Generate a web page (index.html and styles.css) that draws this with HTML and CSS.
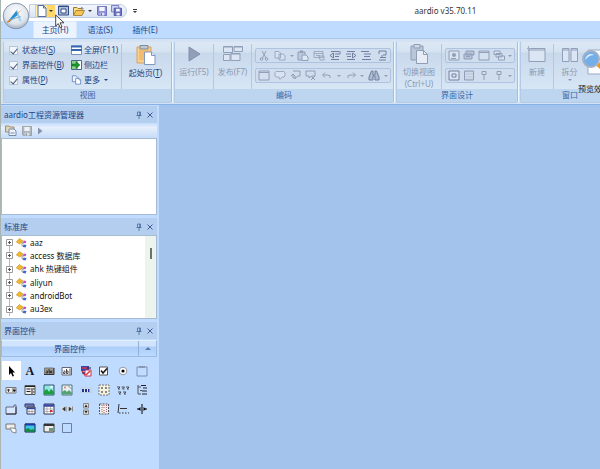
FILE: index.html
```html
<!DOCTYPE html>
<html lang="zh-CN">
<head>
    <meta charset="utf-8">
    <title>aardio v35.70.11</title>
    <link rel="stylesheet" href="styles.css">
</head>
<body>

<!-- Shared icons -->
<svg class="sprite" aria-hidden="true">
    <symbol id="pin" viewBox="0 0 6 8"><path d="M1.5 1h3v3.500h-3zM.5 4.500h5M3 4.500V8M3.700 1v3.500" fill="none" stroke="#4a6a9e" stroke-width=".8"/></symbol>
    <symbol id="close" viewBox="0 0 6 6"><path d="M.5.500l5 5M5.500.500l-5 5" stroke="#3f619a"/></symbol>
    <symbol id="plus" viewBox="0 0 7 7"><path d="M.5.500h6v6h-6z" fill="#fff" stroke="#9c9c9c"/><path d="M2 3.500h3M3.500 2v3" stroke="#555"/></symbol>
    <symbol id="lib" viewBox="0 0 11 10"><path d="M3.500.500L7 3 3.800 6 .300 4z" fill="#f0b82e" stroke="#c98a17" stroke-width=".6"/><path d="M6 4.500v3.500h2M6 5h2" stroke="#777" fill="none" stroke-width=".7"/><path d="M7.500 2.500l2.800.6-.6 2.200-2.600-.4z" fill="#c24fc4"/><path d="M7.500 6.500l3 .5-.9 2.500-2.800-.6z" fill="#3a6ad0"/></symbol>
    <symbol id="disk" viewBox="0 0 11 11"><path d="M.5.500h10v10h-9l-1-1z" fill="#8d91d6" stroke="#6468b8"/><path d="M2.500 1h6v4.500h-6z" fill="#f2f4ff"/><path d="M3 7.500h5v3H3z" fill="#dfe3fa"/><path d="M4 8h1.500v2.500H4z" fill="#5d62b4"/></symbol>
    <symbol id="copy" viewBox="0 0 12 12"><path d="M1 1h4.500l2 2v5H1z" fill="#f3f7fd" stroke="#5b82bd"/><path d="M5 4h4l2 2v5H5z" fill="#fff" stroke="#5b82bd"/><path d="M9 4v2h2" fill="none" stroke="#5b82bd" stroke-width=".7"/></symbol>
    <symbol id="win" viewBox="0 0 12 11"><path d="M1 1h10v9H1z" fill="#d4dff0" stroke="currentColor"/><path d="M1 2.500h10" stroke="currentColor"/></symbol>
    <symbol id="wrench" viewBox="0 0 10 11"><path d="M3 1.500h4M3 1.500v3h4v-3M5 4.500V10" fill="none" stroke="currentColor"/></symbol>
    <symbol id="bubble" viewBox="0 0 12 11"><path d="M2 1.500h8l1 1.500v3l-1 1H8L6 9.500 5 7H2L1 6V2.500z" fill="#d8e3f3" stroke="currentColor" stroke-width=".8"/></symbol>
</svg>

<header class="titlebar">
    <button class="orb" aria-label="aardio">
        <svg viewBox="0 0 28 28"><defs><radialGradient id="orb-fill" cx=".5" cy=".35" r=".7"><stop offset="0" stop-color="#fff"/><stop offset=".65" stop-color="#dce3ec"/><stop offset="1" stop-color="#93a3b9"/></radialGradient></defs>
            <circle cx="14" cy="14" r="12.800" fill="url(#orb-fill)" stroke="#8796ab"/>
            <path d="M15 7l4.500 12-2 .7L14 11z" fill="#a5d2ea"/>
            <path d="M20.500 7L12 15.500l-1-1z" fill="#ed8b25"/>
            <path d="M14.500 8.500L5 20.500l2.500-.5 8-7z" fill="#2a8fd0"/>
            <path d="M9 17.500l10-3" stroke="#79b7d9"/>
            <path d="M5 20.500l4-3" stroke="#ed8b25" stroke-width="1.500"/>
        </svg>
    </button>
    <nav class="quick">
        <button class="quick-new" aria-label="新建">
            <svg width="10" height="12" viewBox="0 0 10 12"><path d="M1 .500h5.500L9 3v8.500H1z" fill="#fff" stroke="#5470a0"/><path d="M6.500.500V3H9" fill="none" stroke="#5470a0"/></svg>
        </button>
        <button class="quick-drop" aria-label="新建选项"><i class="arrow"></i></button>
        <button aria-label="窗体"><svg width="11" height="11" viewBox="0 0 11 11"><path d="M.5 1h10v9H.500z" fill="#aebfe0" stroke="#344c82"/><path d="M1 1.500h9" stroke="#344c82"/><path d="M3 4h5v4H3z" fill="#fff" stroke="#344c82"/></svg></button>
        <button aria-label="打开"><svg width="12" height="10" viewBox="0 0 12 10"><path d="M.5 9V1.500h3.500l1 1h4V4" fill="#f8dc86" stroke="#a17b2d"/><path d="M.5 9.500L3 4.500h8.500L9 9.500z" fill="#f6c655" stroke="#9c7427" stroke-width=".8"/><path d="M8 1.500l2.500 1" stroke="#5a82bb"/></svg></button>
        <button class="slim" aria-label="最近文件"><i class="arrow"></i></button>
        <button aria-label="保存"><svg width="10" height="10"><use href="#disk"/></svg></button>
        <button aria-label="全部保存"><svg width="11" height="11" viewBox="0 0 12 12"><path d="M.5.500h8v7h-8z" fill="#cdd2f4" stroke="#7074c0"/><path d="M3.500 3.500h8v8h-8z" fill="#6d73c4" stroke="#4e549f"/><path d="M5.500 4h4v3h-4zM6 9h3.500v2.500H6z" fill="#f2f4ff"/></svg></button>
    </nav>
    <button class="customize" aria-label="自定义"><i class="arrow"></i></button>
    <h1 class="caption">aardio v35.70.11</h1>
    <svg class="cursor" viewBox="0 0 10 15"><path d="M.7 1v11l2.600-2.400 1.900 4.200 1.800-.8-1.900-4.200H9z" fill="#fff" stroke="#333" stroke-width=".9"/></svg>
</header>

<nav class="tabs">
    <button class="tab active">主页(H)</button>
    <button class="tab">语法(S)</button>
    <button class="tab">插件(E)</button>
</nav>

<section class="ribbon">
    <div class="group">
        <div class="group-body">
            <div class="checks">
                <label><input type="checkbox" checked>状态栏(<u>S</u>)</label>
                <label><input type="checkbox" checked>界面控件(<u>B</u>)</label>
                <label><input type="checkbox" checked>属性(<u>P</u>)</label>
            </div>
            <div class="commands">
                <button><svg width="11" height="10" viewBox="0 0 11 10"><path d="M.5 1h10v8.500H.500z" fill="#fff" stroke="#7892bd"/><path d="M0 1.500h11M0 5h11" stroke="#3567b5" stroke-width="2"/></svg>全屏(F11)</button>
                <button><svg width="11" height="10" viewBox="0 0 11 10"><path d="M.5.500h10v9H.500z" fill="#fff" stroke="#46698e"/><path d="M1 1h6v8H1z" fill="#8fce8b"/><path d="M1 4h4V1.500L9 5 5 8.500V6H1z" fill="#17992c" stroke="#086918" stroke-width=".5"/></svg>侧边栏</button>
                <button><svg width="11" height="10"><use href="#copy"/></svg>更多<i class="arrow"></i></button>
            </div>
            <button class="big wide split">
                <svg width="20" height="21" viewBox="0 0 20 21"><path d="M1 3h14v16H1z" fill="#f6cf8c" stroke="#d9a35c"/><path d="M4 1.500h8V5H4z" fill="#c1c8d2" stroke="#7e8898"/><path d="M3 6h10v10H3z" fill="#f0bd70"/><path d="M8.500 8h7L19 11.500v9H8.500z" fill="#fff" stroke="#8199bd"/><path d="M15.500 8v3.500H19" fill="#dbe6f5" stroke="#8199bd"/></svg>
                <span>起始页(<u>T</u>)</span>
            </button>
        </div>
        <h2 class="group-name">视图</h2>
    </div>

    <div class="group disabled">
        <div class="group-body">
            <button class="big" disabled>
                <svg width="20" height="20" viewBox="0 0 20 20"><path d="M5 3l11 7-11 7z" fill="#929eb7" stroke="#8390ac"/></svg>
                <span>运行(F5)</span>
            </button>
            <button class="big split" disabled>
                <svg width="20" height="20" viewBox="0 0 20 20"><g fill="#dbe5f3" stroke="#919fb9"><path d="M.5 2.500h9v6h-9zM11 2.500h8.500v5H11zM.500 10.500h6.500v6H.500zM8 9.500h9v7H8z"/></g><path d="M.5 3h9M11 3h8.500M8 10h9" stroke="#919fb9"/></svg>
                <span>发布(F7)</span>
            </button>
            <div class="tools split">
                <div class="strip code-strip">
                    <svg viewBox="0 0 12 11"><path d="M4 1l4 7M8 1L4.500 8" stroke="currentColor"/><circle cx="3.500" cy="9" r="1.300" fill="none" stroke="currentColor"/><circle cx="8.500" cy="9" r="1.300" fill="none" stroke="currentColor"/></svg>
                    <svg viewBox="0 0 12 11"><path d="M1 1.500h4l1.500 1.500v5H1zM5 4h4l2 1.500V10H5z" fill="#d5e1f2" stroke="currentColor" stroke-width=".8"/></svg>
                    <i class="arrow"></i>
                    <svg viewBox="0 0 12 11"><path d="M1 2h7v8H1z" fill="#bdc9dd" stroke="currentColor"/><path d="M3 .500h3V3H3z" fill="currentColor"/><path d="M5 5h4l2 2v3.500H5z" fill="#dde7f5" stroke="currentColor"/></svg>
                    <svg viewBox="0 0 12 11"><path d="M1 1.500h9v6H1zM1 3.500h9M3 5.500h4M6 6h5v4H7z" fill="none" stroke="currentColor" stroke-width=".8"/></svg>
                    <svg viewBox="0 0 12 11" class="dark"><path d="M2 1.500h8M6 4h5M6 6.500h4M2 9.500h8M4.500 3v5L1 5.500zM11 1v3" fill="none" stroke="currentColor"/></svg>
                    <svg viewBox="0 0 12 11" class="dark"><path d="M2 1.500h8M1 4h5M2 6.500h4M2 9.500h8M7.500 3v5L11 5.500z" fill="none" stroke="currentColor"/></svg>
                    <svg viewBox="0 0 12 11" class="dark"><path d="M1 1.500h8M4 4h7M4 6.500h6M2 9.500h9" stroke="currentColor"/></svg>
                    <svg viewBox="0 0 12 11" class="dark"><path d="M3 1h7v4H7M3 1v3M6 5v2M4 7.500h6M3 10h7" fill="none" stroke="currentColor"/></svg>
                </div>
                <div class="strip code-strip">
                    <svg><use href="#win"/></svg>
                    <svg><use href="#bubble"/></svg>
                    <svg viewBox="0 0 12 11"><path d="M3 1h7v5H8L5 8.500V6M1 6l2-2 2 2M3 4v4h3" fill="none" stroke="currentColor"/></svg>
                    <svg viewBox="0 0 12 11"><path d="M1 1h9v5H7L4 8V6H1zM6 6l4 4M10 6l-4 4" fill="none" stroke="currentColor"/></svg>
                    <svg viewBox="0 0 12 11"><path d="M4 2.500L1.500 5 4 7.500M2 5h5q3 0 2 3" fill="none" stroke="currentColor"/></svg>
                    <i class="arrow"></i>
                    <svg viewBox="0 0 12 11"><path d="M8 2.500L10.500 5 8 7.500M10 5H5Q2 5 3 8" fill="none" stroke="currentColor"/></svg>
                    <i class="arrow"></i>
                    <svg viewBox="0 0 12 11" class="dark"><path d="M3.500 1h1.500v4H7V1h1.500L11 7v3H7V6H5v4H1V7z" fill="#aebbd2" stroke="currentColor"/></svg>
                    <i class="arrow"></i>
                </div>
            </div>
        </div>
        <h2 class="group-name">编码</h2>
    </div>

    <div class="group disabled">
        <div class="group-body">
            <button class="big medium" disabled>
                <svg width="20" height="20" viewBox="0 0 20 20"><path d="M2 2h12v14H2z" fill="#b9c5d8" stroke="#8f9db5"/><path d="M5 .500h6V4H5z" fill="#d0d9e6" stroke="#8f9db5"/><path d="M7.500 6.500h7l4 4v9h-11z" fill="#e6edf7" stroke="#8f9db5"/><path d="M14.500 6.500v4h4" fill="none" stroke="#8f9db5"/></svg>
                <span>切换视图<br>(Ctrl+U)</span>
            </button>
            <div class="tools split">
                <div class="strip">
                    <svg viewBox="0 0 12 11"><path d="M1 1h10v9H1z" fill="#d8e2f1" stroke="currentColor"/><circle cx="6" cy="5" r="2" fill="currentColor"/><path d="M3 8.500h5" stroke="currentColor"/></svg>
                    <svg viewBox="0 0 12 11"><path d="M3 1h8v4H3zM1 4h8v5H1z" fill="#b6c4da" stroke="currentColor"/><path d="M3 6.500h4" stroke="currentColor"/></svg>
                    <svg><use href="#win"/></svg>
                    <svg viewBox="0 0 12 11"><path d="M1 1h6v3.500H1zM3 3.500h6V7H3zM5.500 6h6v4h-6z" fill="#d8e2f1" stroke="currentColor"/></svg>
                    <i class="arrow"></i>
                </div>
                <div class="strip">
                    <svg viewBox="0 0 12 11" class="dark"><path d="M1 1h10v9H1zM4 4h4v3H4z" fill="#dbe5f3" stroke="currentColor"/></svg>
                    <svg viewBox="0 0 12 11"><path d="M1.500 1h9v9h-9z" fill="#bfcbdf" stroke="currentColor"/><path d="M2 3h8M2 5.500h8M2 8h8" stroke="#d6e0ee"/></svg>
                    <svg><use href="#wrench"/></svg>
                    <svg><use href="#wrench"/></svg>
                    <i class="arrow"></i>
                </div>
            </div>
        </div>
        <h2 class="group-name">界面设计</h2>
    </div>

    <div class="group disabled last">
        <div class="group-body">
            <button class="big narrow" disabled>
                <svg width="20" height="20" viewBox="0 0 20 20"><path d="M2 4.500h16v13H2z" fill="#dbe5f3" stroke="#919fb9"/><path d="M2 6h16" stroke="#919fb9"/><path d="M1.500 2v5M-.5 4.500h4" stroke="#a3afc5"/></svg>
                <span>新建</span>
            </button>
            <button class="big narrow split" disabled>
                <svg width="20" height="20" viewBox="0 0 20 20"><path d="M2.500 4.500h6.500v13H2.500zM11 4.500h6.500v13H11z" fill="#dbe5f3" stroke="#919fb9"/><path d="M2.500 6h6.500M11 6h6.500" stroke="#919fb9"/></svg>
                <span>拆分</span>
                <i class="arrow"></i>
            </button>
        </div>
        <h2 class="group-name">窗口</h2>
    </div>

    <button class="preview">
        <svg width="32" height="28" viewBox="0 0 32 28"><path d="M10 2h15l5 5v19H10z" fill="#fbfcff" stroke="#9aa9c1"/><path d="M25 2v5h5" fill="#dce5f1" stroke="#9aa9c1"/><path d="M20 16l9 8" stroke="#e59b2a" stroke-width="5"/><circle cx="13" cy="11" r="8" fill="#74aee8" stroke="#a3b0c6" stroke-width="2"/><path d="M7.500 10q3-6 9-3-6 0-9 5z" fill="#d8efff"/></svg>
        <span>预览效果</span>
    </button>
</section>

<main class="main">
    <aside class="sidebar">
        <section class="panel">
            <header class="panel-head">
                <h3>aardio工程资源管理器</h3>
                <button aria-label="固定"><svg width="6" height="8"><use href="#pin"/></svg></button>
                <button aria-label="关闭"><svg width="6" height="6"><use href="#close"/></svg></button>
            </header>
            <div class="panel-tools">
                <button aria-label="工程"><svg width="12" height="11" viewBox="0 0 12 11"><path d="M.5 7V1H4l1 1h4v5z" fill="#e0d5bb" stroke="#9b8e76"/><path d="M4 4h5l2 2v4.500H4z" fill="#edf2fa" stroke="#768aa9"/><path d="M5.500 8h4" stroke="#768aa9"/></svg></button>
                <button aria-label="保存" class="gray"><svg width="10" height="10"><use href="#disk"/></svg></button>
                <button aria-label="运行"><svg width="6" height="8" viewBox="0 0 6 8"><path d="M1 .500L5.500 4 1 7.500z" fill="#8492ae"/></svg></button>
            </div>
            <div class="project"></div>
        </section>

        <section class="panel">
            <header class="panel-head">
                <h3>标准库</h3>
                <button aria-label="固定"><svg width="6" height="8"><use href="#pin"/></svg></button>
                <button aria-label="关闭"><svg width="6" height="6"><use href="#close"/></svg></button>
            </header>
            <div class="library">
                <ul class="tree">
                    <li><svg width="7" height="7"><use href="#plus"/></svg><svg width="11" height="10"><use href="#lib"/></svg>aaz</li>
                    <li><svg width="7" height="7"><use href="#plus"/></svg><svg width="11" height="10"><use href="#lib"/></svg>access 数据库</li>
                    <li><svg width="7" height="7"><use href="#plus"/></svg><svg width="11" height="10"><use href="#lib"/></svg>ahk 热键组件</li>
                    <li><svg width="7" height="7"><use href="#plus"/></svg><svg width="11" height="10"><use href="#lib"/></svg>aliyun</li>
                    <li><svg width="7" height="7"><use href="#plus"/></svg><svg width="11" height="10"><use href="#lib"/></svg>androidBot</li>
                    <li><svg width="7" height="7"><use href="#plus"/></svg><svg width="11" height="10"><use href="#lib"/></svg>au3ex</li>
                </ul>
                <div class="scroll"><div class="thumb"></div></div>
            </div>
        </section>

        <section class="panel">
            <header class="panel-head">
                <h3>界面控件</h3>
                <button aria-label="固定"><svg width="6" height="8"><use href="#pin"/></svg></button>
                <button aria-label="关闭"><svg width="6" height="6"><use href="#close"/></svg></button>
            </header>
            <button class="fold"><span>界面控件</span><span class="fold-arrow"><i class="arrow up"></i></span></button>
            <div class="palette">
                <button class="selected" aria-label="选择"><svg viewBox="0 0 12 12"><path d="M4 1v9l2-2 1.500 3.500L9 11 7.500 7.500H10z" fill="#000"/></svg></button>
                <button aria-label="static" class="letter">A</button>
                <button aria-label="button"><svg viewBox="0 0 12 12"><path d="M1.500 3h9v6.500h-9z" fill="#a09c94" stroke="#777"/><path d="M1 9.500h10V3" fill="none" stroke="#333"/><path d="M3 6h1.500v2H3V7M6 4v4h1.500V6H6M9.500 6H8.500v2h1" fill="none" stroke="#222" stroke-width=".8"/></svg></button>
                <button aria-label="edit"><svg viewBox="0 0 12 12"><path d="M1 2.500h9.500v7.500H1z" fill="#fff" stroke="#667"/><path d="M2.500 6H4v2.500H2.500V7M5.500 4v4.500H7V6H5.500M9 3.500v6" fill="none" stroke="#222" stroke-width=".8"/></svg></button>
                <button aria-label="richedit"><svg viewBox="0 0 12 12"><path d="M1 1h8v5H1z" fill="#3448b5"/><path d="M5 5h6v6H5z" fill="#fff" stroke="#c23050"/><path d="M2 3h5M6 10l4-4M2 6l3 4" stroke="#d34" stroke-width="1.500"/><path d="M2 8h3M7 3h4" stroke="#225"/></svg></button>
                <button aria-label="checkbox"><svg viewBox="0 0 12 12"><path d="M1.500 2h8v8h-8z" fill="#fff" stroke="#555"/><path d="M3 5.500l2 2.500 4-4.500" fill="none" stroke="#111" stroke-width="1.500"/></svg></button>
                <button aria-label="radio"><svg viewBox="0 0 12 12"><circle cx="6" cy="6" r="3.800" fill="#fff" stroke="#999"/><circle cx="6" cy="6" r="1.600"/></svg></button>
                <button aria-label="groupbox"><svg viewBox="0 0 12 12"><path d="M3 2H1v9h10V2H9" fill="none" stroke="#7890b0"/><path d="M4 1v2M6 1v2M8 1v2" stroke="#556"/></svg></button>

                <button aria-label="combobox"><svg viewBox="0 0 12 12"><path d="M1 3.500h10v5.500H1z" fill="#eee" stroke="#777"/><path d="M7 4h4v5H7z" fill="#aaa"/><path d="M2 6h3M3.500 5v3M8 6h2.500L9.200 7.500z" stroke="#222" stroke-width=".8"/></svg></button>
                <button aria-label="listbox"><svg viewBox="0 0 12 12"><path d="M1 1.500h10v9H1z" fill="#eee" stroke="#555"/><path d="M1 2.500h10M2.500 5h4M2.500 7.500h4M8 4v6" stroke="#222"/><path d="M9 5h1.500M9 8h1.500" stroke="#222"/></svg></button>
                <button aria-label="picturebox"><svg viewBox="0 0 12 12"><path d="M1 1h10v10H1z" fill="#8fe8df" stroke="#357"/><path d="M1 10.500V7l3-2 2 3 2-3 3 3v2.500z" fill="#1f9d3f"/><circle cx="8.500" cy="3" r="1.200" fill="#fff"/></svg></button>
                <button aria-label="plus"><svg viewBox="0 0 12 12"><path d="M1 1h10v10H1z" fill="#e6f0f3" stroke="#577"/><path d="M1 10.500V8l3-2 2 2 2-2 3 3v1.500z" fill="#56a077"/><path d="M7 1.500L10.500 5" stroke="#889"/><circle cx="4" cy="3.500" r="1" fill="#d77"/></svg></button>
                <button aria-label="progress"><svg viewBox="0 0 12 12"><path d="M1 4h10v4.500H1z" fill="#e0e8f6" stroke="#bcd"/><path d="M2 5h2v3H2zM5 5h2v3H5zM8 5h1.500v3H8z" fill="#203090"/></svg></button>
                <button aria-label="listview"><svg viewBox="0 0 12 12"><path d="M1 1h10v10H1z" fill="#f5f1dd" stroke="#777" stroke-dasharray="2 1"/><path d="M3 3h2v2H3zM7 3h2v2H7zM3 7h2v2H3zM7 7h2v2H7z" fill="#888"/></svg></button>
                <button aria-label="ipaddress"><svg viewBox="0 0 12 12"><path d="M0 3h3L1 5h2M4.500 3h3l-2 2h2M9 3h3l-2 2h2M1 8h3l-2 2h2M6 8h3l-2 2h2" fill="none" stroke="#333" stroke-width=".8"/></svg></button>
                <button aria-label="treeview"><svg viewBox="0 0 12 12"><path d="M2 1v9h3M2 3h3M4 6.500h2" fill="none" stroke="#555"/><path d="M5 1.500h5M7 4h4M6 7h5M6 10h5" stroke="#223"/></svg></button>

                <button aria-label="tab"><svg viewBox="0 0 12 12"><path d="M1 4h8v-2h2v9H1z" fill="#d9e8ff" stroke="#668"/><path d="M1 11h10V4" fill="none" stroke="#333"/></svg></button>
                <button aria-label="datetimepick"><svg viewBox="0 0 12 12"><path d="M1 1h9v3H1zM3 4h8v7H3z" fill="#fff" stroke="#335"/><path d="M1 2h9M3 5.500h8" stroke="#3548a0" stroke-width="1.500"/><path d="M5 7v3M8 7v3M4 8.500h6" stroke="#888" stroke-width=".7"/></svg></button>
                <button aria-label="calendar"><svg viewBox="0 0 12 12"><path d="M1 1h10v10H1z" fill="#fff" stroke="#335"/><path d="M1 2.500h10" stroke="#3548a0" stroke-width="2.500"/><path d="M1.500 6h9M1.500 8.500h9M4 4v7M7.500 4v7" stroke="#999" stroke-width=".7"/><path d="M7 7h2.500v2H7z" fill="#c33"/></svg></button>
                <button aria-label="hscroll"><svg viewBox="0 0 12 12"><path d="M.5 3.500H5v5H.500zM7 3.500h4.500v5H7z" fill="#ddd"/><path d="M4 4v4L1.500 6zM8 4v4l2.500-2zM5 3.500v5M11.500 3.500v5" fill="#222" stroke="#555" stroke-width=".6"/></svg></button>
                <button aria-label="vscroll"><svg viewBox="0 0 12 12"><path d="M3.500.500h5V5h-5zM3.500 7h5v4.500h-5z" fill="#ddd" stroke="#888"/><path d="M4.500 4h3L6 1.500zM4.500 8h3L6 10.500z" fill="#222"/></svg></button>
                <button aria-label="trackbar"><svg viewBox="0 0 12 12"><path d="M1.500 1h9v10h-9z" fill="#f0f0f0" stroke="#555" stroke-dasharray="2 1"/><path d="M4 2v8M6 2v3M6 7v3M8.500 2v8" stroke="#a66" stroke-dasharray="1 1"/></svg></button>
                <button aria-label="spin"><svg viewBox="0 0 12 12"><path d="M2 1L1 10M3 5.500h7M2 10h1.500M5 10h1.500M8 10h1.500M11 10h1" stroke="#333"/></svg></button>
                <button aria-label="splitter"><svg viewBox="0 0 12 12"><path d="M6 1v10M1 6h3M8 6h3" stroke="#000"/><path d="M4.500 4v4L2 6zM7.500 4v4L10 6z"/></svg></button>

                <button aria-label="syslink"><svg viewBox="0 0 12 12"><path d="M1 2h9v5H1z" fill="#eee" stroke="#777"/><path d="M5 6l2 4 4 1V7L8 6z" fill="#fff" stroke="#888"/></svg></button>
                <button aria-label="custom"><svg viewBox="0 0 12 12"><path d="M1 2h10v8H1z" fill="#39c5e8" stroke="#123"/><path d="M1 2.500h10" stroke="#2438a5" stroke-width="2"/><path d="M1 9.500V8l3-2 3 2 2-1 2 2.500z" fill="#148b34"/></svg></button>
                <button aria-label="webform"><svg viewBox="0 0 12 12"><path d="M1 2h10v8H1z" fill="#eee" stroke="#333"/><path d="M1 3h10" stroke="#333" stroke-width="2"/><path d="M6 6h4v3H6z" fill="#6a9a70"/></svg></button>
                <button aria-label="bk"><svg viewBox="0 0 12 12"><path d="M1.500 1.500h9v9h-9z" fill="none" stroke="#6d7f9e"/></svg></button>
            </div>
        </section>
    </aside>
    <div class="workspace"></div>
</main>

</body>
</html>
```

FILE: styles.css
```css
* {
    box-sizing: border-box;
}

body {
    margin: 0;
    min-height: 100vh;
    display: flex;
    flex-direction: column;
    border-left: 1px solid #a9b5b0;
    background: #bfdbff;
    color: #1e4484;
    font: 8px/12px "Noto Sans", "Noto Sans CJK SC", sans-serif;
    overflow: hidden;
}

button {
    display: flex;
    align-items: center;
    padding: 0;
    border: 0;
    background: none;
    color: inherit;
    font: inherit;
}

h1,
h2,
h3 {
    margin: 0;
    font-size: 8px;
    font-weight: normal;
}

svg {
    display: block;
    flex: none;
}

.sprite {
    position: absolute;
    width: 0;
    height: 0;
}

/* Small drop-down triangle */
.arrow {
    border: 2px solid transparent;
    border-top-color: currentColor;
    border-bottom: 0;
}

.arrow.up {
    border: 3px solid transparent;
    border-bottom-color: #5c7cac;
    border-top: 0;
}

/* Title bar */
.titlebar {
    position: relative;
    display: flex;
    align-items: center;
    height: 21px;
    background: #fff;
}

.orb {
    position: absolute;
    z-index: 2;
    top: 2px;
    left: 1px;
}

.orb svg {
    width: 28px;
    height: 28px;
}

.quick {
    display: flex;
    align-items: center;
    gap: 2px;
    height: 14px;
    margin-left: 28px;
    padding: 0 3px 0 5px;
    border: 1px solid #c0cee2;
    border-radius: 0 7px 7px 0;
    background: linear-gradient(#f3f6fc, #dae4f4);
}

.quick button {
    justify-content: center;
    width: 13px;
    height: 12px;
    color: #333;
}

.quick .quick-new {
    background: #fff0b5;
    border: 1px solid #edd283;
}

.quick .quick-drop {
    width: 8px;
    margin-left: -3px;
    background: #ffd667;
}

.quick .slim {
    width: 6px;
}

.customize {
    flex-direction: column;
    gap: 1px;
    margin-left: 6px;
    color: #333;
}

.customize::before {
    content: "";
    width: 4px;
    height: 1px;
    background: #333;
}

.caption {
    flex: 1;
    padding-left: 154px;
    color: #333;
    text-align: center;
}

.cursor {
    position: absolute;
    z-index: 3;
    top: 14px;
    left: 54px;
    width: 10px;
    height: 15px;
}

/* Tabs */
.tabs {
    display: flex;
    gap: 1px;
    height: 17px;
    padding-left: 32px;
}

.tab {
    justify-content: center;
    width: 44px;
}

.tab.active {
    border: 1px solid #d8e8fb;
    border-bottom: 0;
    border-radius: 2px 2px 0 0;
    background: #eaf3fe;
}

/* Ribbon */
.ribbon {
    position: relative;
    display: flex;
    gap: 2px;
    padding: 2px 0 1px 2px;
    border-top: 1px solid #a9c7ed;
    border-bottom: 1px solid #86b2e5;
    background: #d3e3f5;
    overflow: hidden;
}

.group {
    flex: none;
    border: 1px solid #b3cae6;
    border-top-color: #d4e2f2;
    border-right-color: #a4bfdf;
    border-radius: 2px;
    background: linear-gradient(#dce8f5 0, #d5e2f1 10px, #c9d9ec 11px, #d7e6f5 47px);
    box-shadow: 1px 0 #edf5fd;
}

.group-body {
    display: flex;
    height: 47px;
    padding: 2px 2px 0 0;
}

.group-name {
    height: 13px;
    background: #bdd5ef;
    color: #3968aa;
    text-align: center;
}

.disabled .group-body {
    color: #8b98b0;
}

.checks,
.commands {
    display: flex;
    flex-direction: column;
    gap: 3px;
}

.checks {
    width: 67px;
    padding-left: 5px;
}

.commands {
    width: 50px;
}

.checks label,
.commands button {
    display: flex;
    align-items: center;
    height: 12px;
    white-space: nowrap;
}

.commands svg {
    margin-right: 2px;
}

.commands .arrow {
    margin-left: 4px;
}

.checks input {
    appearance: none;
    width: 9px;
    height: 9px;
    margin: 0 4px 0 0;
    border: 1px solid #b8c6da;
    background: #f2f5f9;
}

.checks input:checked::before {
    content: "";
    display: block;
    width: 3px;
    height: 6px;
    margin-left: 2px;
    border: solid #425879;
    border-width: 0 1px 1px 0;
    transform: rotate(40deg);
}

.big {
    flex-direction: column;
    width: 38px;
    color: inherit;
    text-align: center;
    white-space: nowrap;
}

.big span {
    margin-top: 2px;
}

.big .arrow {
    margin-top: 1px;
}

.big.wide {
    width: 48px;
}

.big.medium {
    width: 44px;
}

.big.narrow {
    width: 32px;
}

.split {
    border-left: 1px solid #b3c8e2;
}

.tools {
    display: flex;
    flex-direction: column;
    align-items: flex-start;
    gap: 5px;
    padding: 4px 0 0 3px;
}

.strip {
    display: flex;
    align-items: center;
    gap: 3px;
    height: 15px;
    padding: 0 2px;
    border: 1px solid #aec3df;
    border-radius: 2px;
    background: #cfddef;
    color: #909eb7;
}

.strip svg {
    width: 12px;
    height: 11px;
}

.code-strip {
    width: 136px;
    justify-content: space-between;
}

.dark {
    color: #71809e;
}

.last {
    width: 100px;
}

.preview {
    position: absolute;
    top: 9px;
    left: 577px;
    flex-direction: column;
    gap: 7px;
    color: #222;
}

/* Main area */
.main {
    flex: 1;
    display: flex;
}

.sidebar {
    width: 158px;
    padding: 1px 2px 0 0;
}

.workspace {
    flex: 1;
    background: #a3c3ec;
}

.panel {
    margin-bottom: 3px;
}

.panel-head {
    display: flex;
    align-items: center;
    gap: 5px;
    height: 17px;
    padding: 0 4px 0 3px;
    background: #b3ceee;
}

.panel-head h3 {
    flex: 1;
}

.panel-tools {
    display: flex;
    gap: 5px;
    height: 15px;
    padding-left: 4px;
    background: linear-gradient(#c4dcfb, #e6effb 30%, #c5dbf8);
}

.panel-tools .gray {
    filter: grayscale(1);
    opacity: .6;
}

.project {
    height: 77px;
    border: 1px solid #a5bad3;
    background: #fff;
}

/* Library tree */
.library {
    display: flex;
    height: 84px;
    border: 1px solid #a5bad3;
    background: #fff;
}

.tree {
    flex: 1;
    display: grid;
    grid-template-rows: repeat(6, 1fr);
    height: 80px;
    margin: 0;
    padding: 0 0 0 4px;
    background: linear-gradient(#bbb, #bbb) 7px 8px / 1px 76px no-repeat;
    list-style: none;
    color: #111;
}

.tree li {
    display: flex;
    align-items: center;
    gap: 3px;
}

.scroll {
    width: 11px;
    padding: 12px 4px 0 5px;
    background: #edf4ed;
}

.thumb {
    height: 11px;
    background: #6b716b;
}

/* Control palette */
.fold {
    width: 100%;
    height: 17px;
    margin-top: 1px;
    border: 1px solid #9dbbe2;
    border-top-color: #e2effd;
    background: linear-gradient(#d0e4fd 0 5px, #abcdf8 6px, #bddbff);
}

.fold span {
    flex: 1;
}

.fold .fold-arrow {
    display: flex;
    flex: none;
    align-items: center;
    justify-content: center;
    width: 18px;
    height: 100%;
    border-left: 1px solid #91b1db;
}

.palette {
    display: grid;
    grid-template-columns: repeat(8, 1fr);
    grid-auto-rows: 19px;
    padding: 4px 6px 0 1px;
}

.palette button {
    justify-content: center;
    color: #111;
}

.palette svg {
    width: 12px;
    height: 12px;
}

.palette .selected {
    background: #fff;
}

.palette .letter {
    font: bold 12px/14px "Liberation Serif", serif;
}
```
